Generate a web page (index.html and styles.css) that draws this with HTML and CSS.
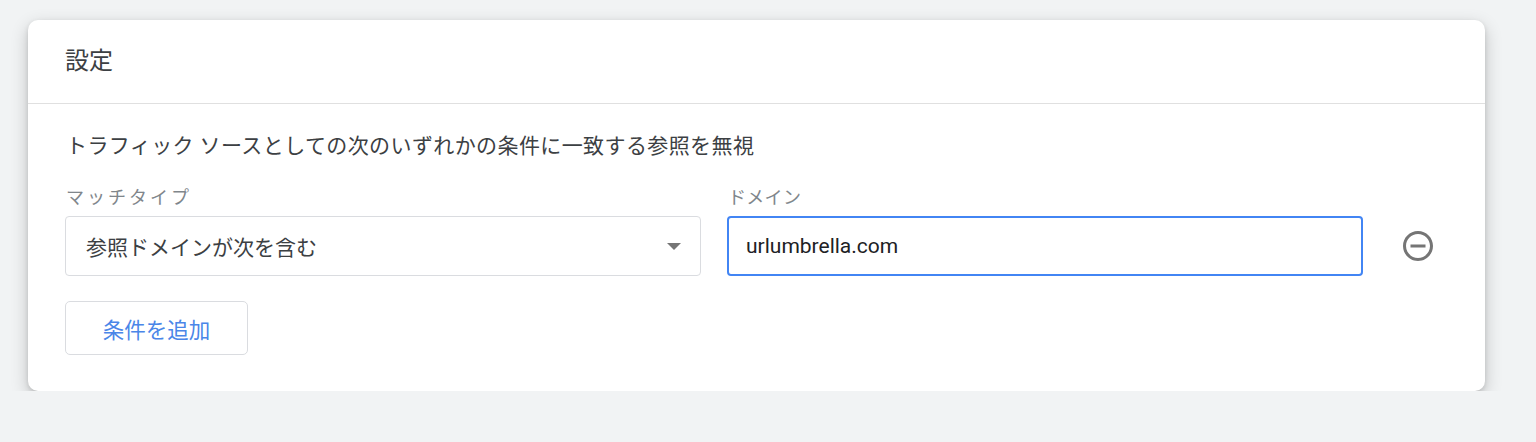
FILE: index.html
```html
<!DOCTYPE html>
<html lang="ja">
<head>
<meta charset="utf-8">
<title>設定</title>
<link rel="stylesheet" href="styles.css">
</head>
<body>
<div class="page">
  <section class="card">
    <header class="card-header">
      <h2 class="card-title">設定</h2>
    </header>
    <div class="card-body">
      <p class="desc">トラフィック ソースとしての次のいずれかの条件に一致する参照を無視</p>
      <div class="row">
        <div class="field">
          <label class="label label-wide">マッチタイプ</label>
          <div class="select">
            <span class="select-text">参照ドメインが次を含む</span>
            <span class="arrow"></span>
          </div>
        </div>
        <div class="field">
          <label class="label">ドメイン</label>
          <div class="input">urlumbrella.com</div>
        </div>
        <div class="remove">
          <svg viewBox="0 0 24 24" width="36" height="36" aria-hidden="true">
            <path fill="#757575" d="M7 11v2h10v-2H7zm5-9C6.48 2 2 6.48 2 12s4.48 10 10 10 10-4.48 10-10S17.52 2 12 2zm0 18c-4.41 0-8-3.59-8-8s3.59-8 8-8 8 3.59 8 8-3.59 8-8 8z"/>
          </svg>
        </div>
      </div>
      <button class="add-btn" type="button">条件を追加</button>
    </div>
  </section>
</div>
</body>
</html>
```
FILE: styles.css
```css
* { box-sizing: border-box; }
html, body {
  margin: 0;
  padding: 0;
  background: #f1f3f4;
  font-family: Roboto, "Noto Sans CJK JP", sans-serif;
}
.page {
  padding: 20px 51px 0 28px;
}
.card {
  width: 1457px;
  background: #fff;
  border-radius: 10px;
  box-shadow: 0 6px 18px rgba(0, 0, 0, 0.2), 0 2px 5px rgba(0, 0, 0, 0.12);
}
.card-header {
  height: 84px;
  border-bottom: 1px solid #e0e0e0;
  display: flex;
  align-items: center;
  padding: 0 37px;
}
.card-title {
  margin: 0;
  font-size: 24px;
  line-height: 24px;
  font-weight: 400;
  color: #3c4043;
  padding-bottom: 2px;
}
.card-body {
  padding: 30px 49px 36px 37px;
}
.desc {
  margin: 0;
  font-size: 21px;
  line-height: 24px;
  letter-spacing: 0.4px;
  color: #3c4043;
  padding-left: 1px;
}
.row {
  display: flex;
  align-items: flex-end;
  margin-top: 30px;
}
.field {
  width: 636px;
  display: flex;
  flex-direction: column;
}
.field + .field { margin-left: 26px; }
.label {
  font-size: 18px;
  line-height: 20px;
  color: #80868b;
  letter-spacing: 0.3px;
  margin-bottom: 8px;
  padding-left: 1px;
}
.label-wide { letter-spacing: 3px; }
.select {
  height: 60px;
  border: 1px solid #dadce0;
  border-radius: 4px;
  display: flex;
  align-items: center;
  justify-content: space-between;
  padding: 0 19px 0 20px;
}
.select-text {
  font-size: 21px;
  color: #3c4043;
}
.arrow {
  width: 0;
  height: 0;
  border-left: 7px solid transparent;
  border-right: 7px solid transparent;
  border-top: 7px solid #757575;
}
.input {
  height: 60px;
  border: 2px solid #4285f4;
  border-radius: 4px;
  display: flex;
  align-items: center;
  padding: 0 17px;
  font-size: 21px;
  color: #202124;
}
.remove {
  width: 36px;
  height: 60px;
  margin-left: 37px;
  display: flex;
  align-items: center;
}
.remove svg { display: block; }
.add-btn {
  margin-top: 25px;
  width: 183px;
  height: 54px;
  border: 1px solid #dadce0;
  border-radius: 5px;
  background: #fff;
  font-family: Roboto, "Noto Sans CJK JP", sans-serif;
  font-size: 21.5px;
  color: #4a86e8;
  padding: 0;
}
```
